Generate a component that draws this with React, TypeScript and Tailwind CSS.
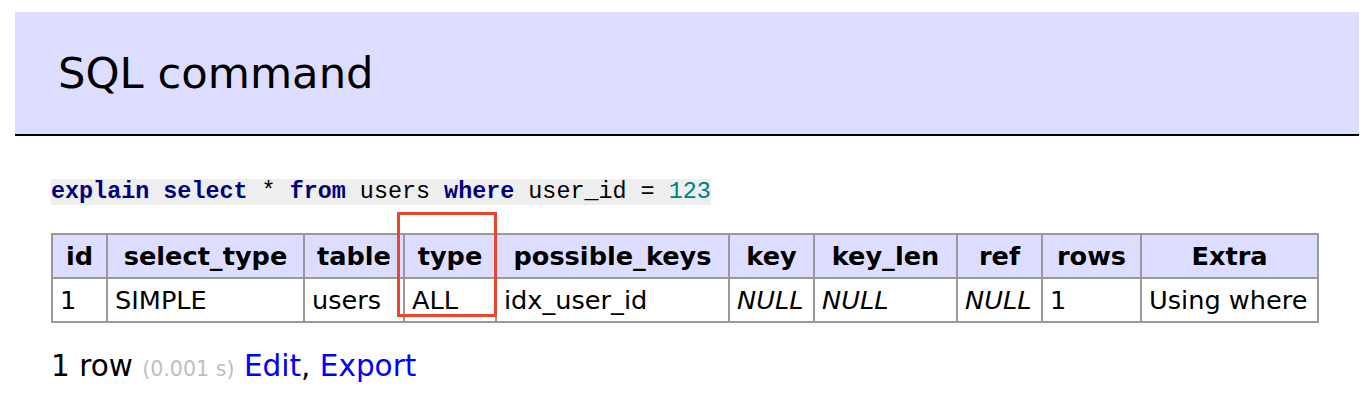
export default function App() {
  const cols = [
    { name: "id", w: "w-[55px]" },
    { name: "select_type", w: "w-[197px]" },
    { name: "table", w: "w-[100px]" },
    { name: "type", w: "w-[92px]" },
    { name: "possible_keys", w: "w-[233px]" },
    { name: "key", w: "w-[85px]" },
    { name: "key_len", w: "w-[143px]" },
    { name: "ref", w: "w-[85px]" },
    { name: "rows", w: "w-[99px]" },
    { name: "Extra", w: "w-[177px]" },
  ];
  const row: (string | null)[] = ["1", "SIMPLE", "users", "ALL", "idx_user_id", null, null, null, "1", "Using where"];

  return (
    <div className="relative min-h-[402px] bg-white pt-[12px] font-['DejaVu_Sans',Verdana,sans-serif] text-[28.5px] leading-[1.25] text-black">
      {/* Page heading */}
      <h2 className="ml-[15px] mr-[7px] border-b-[2.5px] border-black bg-[#ddf] px-[43px] py-[34px] text-[43.3px] font-normal leading-[54px]">
        SQL command
      </h2>

      <div className="pl-[51px]">
        {/* Executed query */}
        <pre className="mt-[40px] font-['DejaVu_Sans_Mono',monospace] text-[23.4px] leading-[29px]">
          <code className="bg-[#eee]">
            <b className="text-[#000080]">explain</b> <b className="text-[#000080]">select</b> *{" "}
            <b className="text-[#000080]">from</b> users <b className="text-[#000080]">where</b> user_id ={" "}
            <span className="text-[#008080]">123</span>
          </code>
        </pre>

        {/* Explain result */}
        <table className="mt-[26px] w-[1268px] table-fixed border-collapse border-2 border-[#999] text-[25.6px] leading-[32px]">
          <colgroup>
            {cols.map((c) => (
              <col key={c.name} className={c.w} />
            ))}
          </colgroup>
          <thead>
            <tr className="bg-[#ddf]">
              {cols.map((c) => (
                <th key={c.name} className="border-2 border-[#999] px-[7px] py-[5px] text-center font-bold whitespace-nowrap">
                  {c.name}
                </th>
              ))}
            </tr>
          </thead>
          <tbody>
            <tr>
              {row.map((v, i) => (
                <td key={i} className="border-2 border-[#999] px-[7px] py-[5px] text-left whitespace-nowrap">
                  {v === null ? <i>NULL</i> : v}
                </td>
              ))}
            </tr>
          </tbody>
        </table>

        {/* Result summary */}
        <p className="mt-[25px] text-[29.5px]">
          1 row <span className="text-[20.6px] text-[#c0c0c0]">(0.001 s)</span>{" "}
          <a href="#" className="text-[#00f]">Edit</a>, <a href="#" className="text-[#00f]">Export</a>
        </p>
      </div>

      {/* Highlight annotation */}
      <div className="pointer-events-none absolute left-[397px] top-[212px] h-[105px] w-[100px] border-[3px] border-[#e8462f]" />
    </div>
  );
}
